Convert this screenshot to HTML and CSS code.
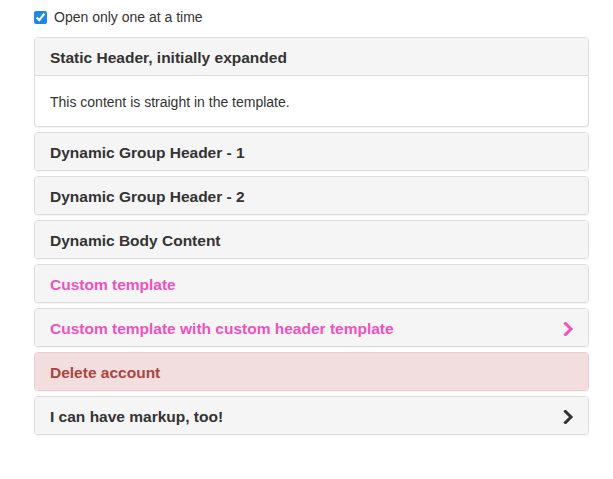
FILE: index.html
```html
<!DOCTYPE html>
<html lang="en">
<head>
  <meta charset="UTF-8" />
  <meta name="viewport" content="width=device-width, initial-scale=1.0"/>
  <title>Accordion</title>
  <link rel="stylesheet" href="styles.css">
</head>
<body>

<div class="page">
  <div class="option">
    <label><input type="checkbox" checked /> Open only one at a time</label>
  </div>

  <div class="panel-group">
    <div class="panel">
      <div class="panel-heading"><h4 class="panel-title">Static Header, initially expanded</h4></div>
      <div class="panel-body">This content is straight in the template.</div>
    </div>
    <div class="panel">
      <div class="panel-heading"><h4 class="panel-title">Dynamic Group Header - 1</h4></div>
    </div>
    <div class="panel">
      <div class="panel-heading"><h4 class="panel-title">Dynamic Group Header - 2</h4></div>
    </div>
    <div class="panel">
      <div class="panel-heading"><h4 class="panel-title">Dynamic Body Content</h4></div>
    </div>
    <div class="panel">
      <div class="panel-heading"><h4 class="panel-title custom">Custom template</h4></div>
    </div>
    <div class="panel">
      <div class="panel-heading">
        <h4 class="panel-title custom">Custom template with custom header template</h4>
        <svg class="chevron" width="11" height="14" viewBox="0 0 11 14"><path d="M2.5 1.5 L8 7 L2.5 12.5" /></svg>
      </div>
    </div>
    <div class="panel panel-danger">
      <div class="panel-heading"><h4 class="panel-title">Delete account</h4></div>
    </div>
    <div class="panel">
      <div class="panel-heading">
        <h4 class="panel-title">I can have markup, too!</h4>
        <svg class="chevron dark" width="11" height="14" viewBox="0 0 11 14"><path d="M2.5 1.5 L8 7 L2.5 12.5" /></svg>
      </div>
    </div>
  </div>
</div>

</body>
</html>
```

FILE: styles.css
```css
body {
  margin: 0;
  font-family: "Liberation Sans", Arial, sans-serif;
  font-size: 14px;
  line-height: 20px;
  color: #333;
  background: #fff;
}

.page {
  margin: 0 24px 0 34px;
}

.option {
  padding-top: 7px;
  margin-bottom: 10px;
}

.option label {
  display: flex;
  align-items: center;
  gap: 7px;
  height: 20px;
  font-size: 14px;
}

.option input {
  margin: 0;
  width: 13px;
  height: 13px;
  accent-color: #1e88e5;
}

.panel {
  background: #fff;
  border: 1px solid #ddd;
  border-radius: 4px;
  box-shadow: 0 1px 1px rgba(0, 0, 0, 0.05);
  margin-bottom: 5px;
  overflow: hidden;
}

.panel-heading {
  display: flex;
  align-items: center;
  justify-content: space-between;
  padding: 11px 14px 9px 15px;
  background: #f5f5f5;
  color: #333;
}

.panel-title {
  margin: 0;
  font-size: 15.5px;
  font-weight: bold;
  line-height: 17px;
}

.panel-title.custom {
  color: #ee52bd;
}

.panel-body {
  border-top: 1px solid #ddd;
  padding: 16px 15px 14px;
}

.panel-danger {
  border-color: #ebccd1;
}

.panel-danger .panel-heading {
  background: #f2dede;
  color: #a94442;
}

.chevron path {
  fill: none;
  stroke: #ee52bd;
  stroke-width: 3;
  stroke-linecap: square;
  stroke-linejoin: miter;
}

.chevron.dark path {
  stroke: #333;
}
```
